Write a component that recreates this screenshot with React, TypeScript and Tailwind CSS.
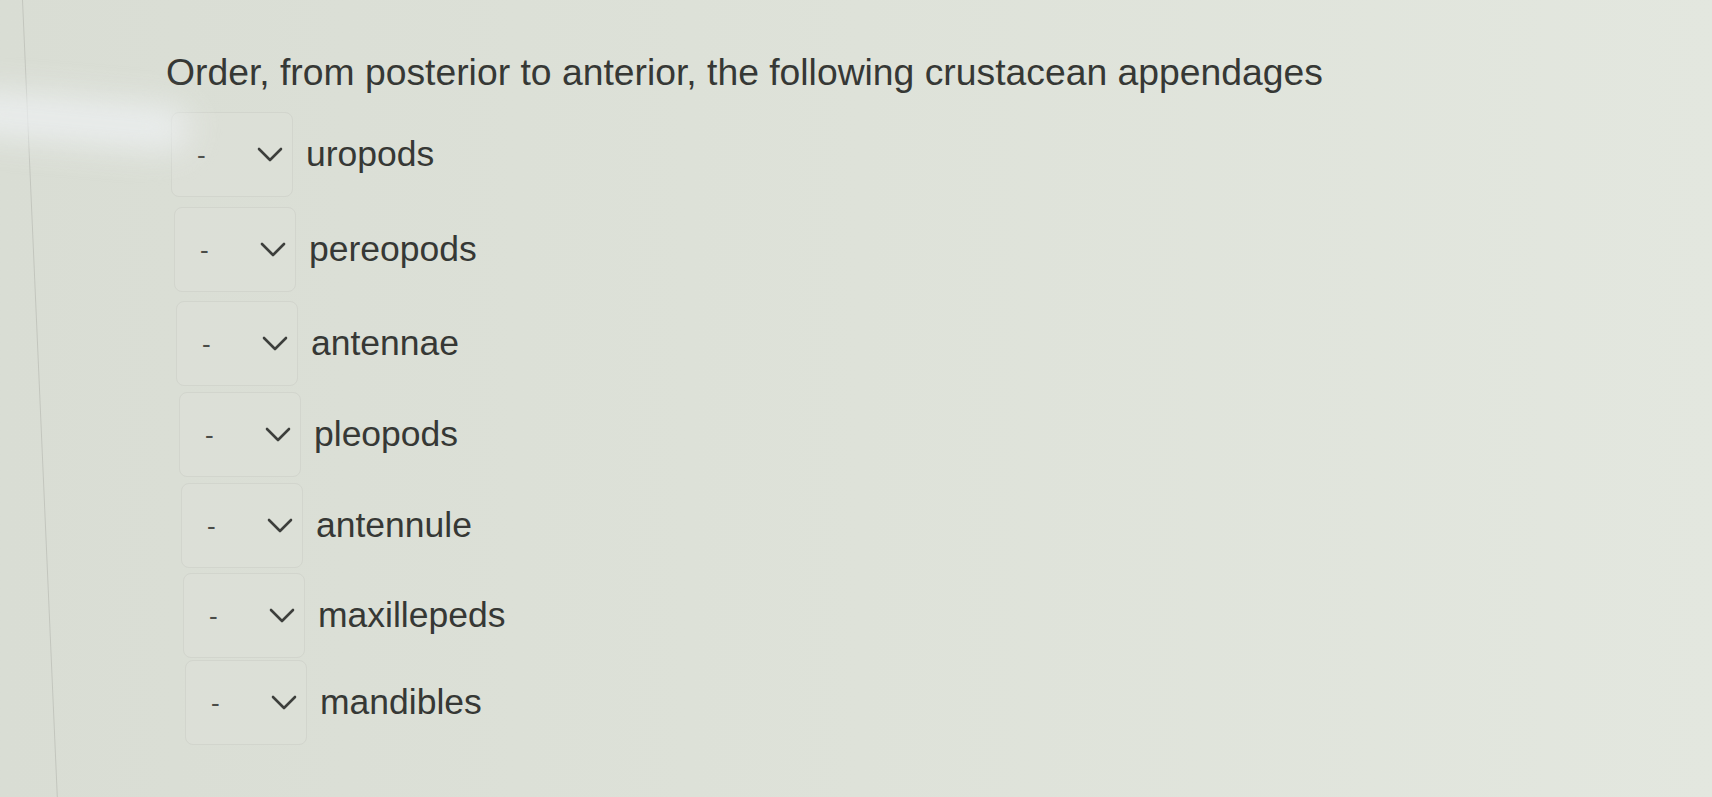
import React from "react";

const items = [
  { label: "uropods", cls: "ml-[0px] mt-[0px]" },
  { label: "pereopods", cls: "ml-[3px] mt-[10px]" },
  { label: "antennae", cls: "ml-[5px] mt-[9px]" },
  { label: "pleopods", cls: "ml-[8px] mt-[6px]" },
  { label: "antennule", cls: "ml-[10px] mt-[6px]" },
  { label: "maxillepeds", cls: "ml-[12px] mt-[5px]" },
  { label: "mandibles", cls: "ml-[14px] mt-[2px]" },
];

function Chevron() {
  return (
    <svg width="28" height="17" viewBox="0 0 28 17" fill="none" className="shrink-0">
      <polyline points="3,3 14,14 25,3" stroke="#3d3f3c" strokeWidth="2.6" strokeLinecap="round" strokeLinejoin="round" />
    </svg>
  );
}

export default function App() {
  return (
    <div
      className="relative flex h-[797px] w-full overflow-hidden bg-linear-to-r from-[#d9ddd4] via-[#dee2d9] to-[#e3e7df] text-[#363835]"
      style={{ fontFamily: '"Liberation Sans", Arial, sans-serif' }}
    >
      <div className="pointer-events-none absolute left-[22px] top-0 h-[820px] w-px origin-top -rotate-[2.5deg] bg-[#c3c6be]" />
      <div className="pointer-events-none absolute left-[-40px] top-[98px] h-[45px] w-[230px] rotate-[5deg] rounded-full bg-[#eef1f3] opacity-80 blur-lg" />
      <div className="flex flex-col pl-[166px] pt-[54px]">
        <h1 className="text-[37.3px] font-normal leading-none">
          Order, from posterior to anterior, the following crustacean appendages
        </h1>
        <div className="mt-[21px] flex flex-col pl-[5px]">
          {items.map((it) => (
            <div key={it.label} className={`flex items-center ${it.cls}`}>
              <div className="flex h-[85px] w-[122px] items-center rounded-lg border border-[#d2d5cd] bg-[#dfe2da]/40">
                <span className="ml-[25px] text-[26px] leading-none text-[#4a4c48]">-</span>
                <span className="ml-auto mr-[8px] flex">
                  <Chevron />
                </span>
              </div>
              <span className="ml-[13px] text-[35.5px] leading-none">{it.label}</span>
            </div>
          ))}
        </div>
      </div>
    </div>
  );
}
